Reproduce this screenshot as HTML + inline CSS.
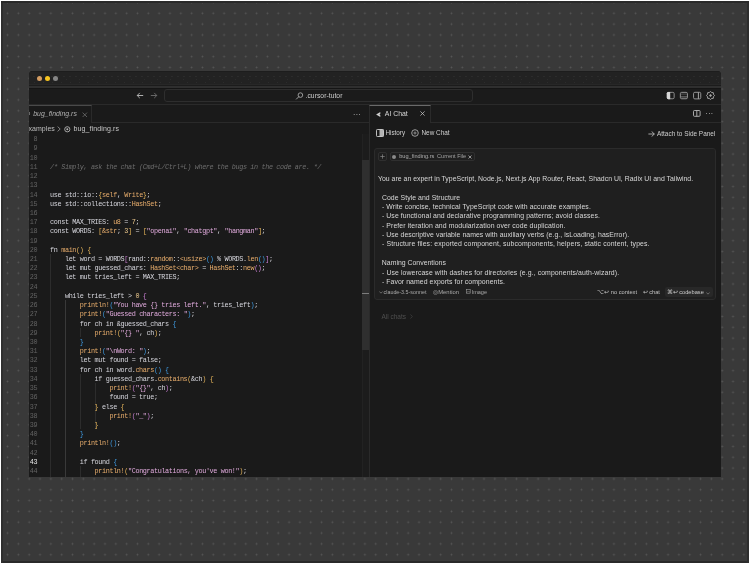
<!DOCTYPE html>
<html><head><meta charset="utf-8">
<style>
*{margin:0;padding:0;box-sizing:border-box}
html,body{width:750px;height:564px;overflow:hidden;background:#fff}
body{position:relative;font-family:"Liberation Sans",sans-serif}
.abs{position:absolute}
#bg{position:absolute;left:1px;top:1px;width:748px;height:562px;background-color:#393939;
 background-image:radial-gradient(circle at center,#575757 0,#4d4d4d 0.7px,rgba(57,57,57,0) 1.35px);
 background-size:10.83px 10.83px;background-position:1.13px 6.9px;
 box-shadow:inset 0 2px 0 #2a2a2a,inset 2px 0 0 #2f2f2f,inset -2px 0 0 #2d2d2d,inset 0 -2px 0 #2a2a2a}
#win{will-change:transform;position:absolute;left:29px;top:71px;width:692px;height:406px;background:#1a1a1a;border-radius:4px 4px 0 0;overflow:hidden}
#title{position:absolute;left:0;top:0;width:692px;height:17px;background:#222;border-bottom:2px solid #2f2f2f}
.tl{position:absolute;top:5px;width:5.2px;height:5.2px;border-radius:50%}
#toolbar{position:absolute;left:0;top:17px;width:692px;height:17px;background:#1b1b1b;border-bottom:1px solid #2a2a2a;border-top:1px solid #151515}
.ui{color:#cfcfcf;white-space:pre;position:absolute;line-height:1}
#tabs{position:absolute;left:0;top:34px;width:692px;height:18px;border-bottom:1px solid #2a2a2a}
pre.code{position:absolute;left:21.1px;top:64.2px;font-family:"Liberation Mono",monospace;font-size:6.8px;letter-spacing:-0.37px;line-height:9.22px;color:#d6d6dd;white-space:pre}
.ln{position:absolute;left:0;top:64.2px;width:8.1px;text-align:right;font-family:"Liberation Mono",monospace;font-size:6.8px;letter-spacing:-0.37px;line-height:9.22px;color:#636363;white-space:pre}
.c{color:#6d6d6d;font-style:italic}
.o{color:#e8ad6c}
.n{color:#ebc88d}
.g{color:#e5b45a}
.m{color:#c77dd0}
.b{color:#3f9ae0}
.s{color:#e0aadc}
.ct{left:349px;font-size:6.9px;line-height:9.36px;color:#d8d8d8}
.guide{position:absolute;width:1px;background:#2c2c2c}
#chat{position:absolute;left:340px;top:34px;width:352px;height:372px;border-left:1px solid #2a2a2a;background:#1a1a1a}
</style></head><body>
<div id="bg"></div>
<div id="win">
  <div id="title">
    <div class="abs" style="left:0;top:0;width:692px;height:1px;background:#1d1d1d"></div>
    <div class="abs" style="left:0;top:4px;width:692px;height:3px;background-image:radial-gradient(circle,#2e2e2e 0,#2b2b2b 0.6px,rgba(34,34,34,0) 1px);background-size:6px 3px;background-position:2px 0"></div>
    <div class="abs" style="left:0;top:7px;width:692px;height:3px;background-image:radial-gradient(circle,#2c2c2c 0,#292929 0.6px,rgba(34,34,34,0) 1px);background-size:13px 3px;background-position:5px 0"></div>
    <div class="abs" style="left:0;top:10.2px;width:692px;height:3px;background-image:radial-gradient(circle,#2c2c2c 0,#292929 0.6px,rgba(34,34,34,0) 1px);background-size:9px 3px;background-position:1px 0"></div>
    <div class="abs" style="left:0;top:13px;width:692px;height:1px;background:#272727"></div>
    <div class="abs" style="left:0;top:14px;width:692px;height:1px;background:#1c1c1c"></div>
    <div class="tl" style="left:8.2px;background:#d39c62"></div>
    <div class="tl" style="left:15.8px;background:#f7c520"></div>
    <div class="tl" style="left:23.5px;background:#858585"></div>
  </div>
  <div id="toolbar">
    <!-- nav arrows -->
    <svg class="abs" style="left:107px;top:3.3px" width="8" height="7" viewBox="0 0 8 7"><path d="M7.2 3.5H1.2M3.8 0.9L1.2 3.5l2.6 2.6" stroke="#c0c0c0" stroke-width="0.9" fill="none"/></svg>
    <svg class="abs" style="left:120.5px;top:3.3px" width="8" height="7" viewBox="0 0 8 7"><path d="M0.8 3.5H6.8M4.2 0.9L6.8 3.5L4.2 6.1" stroke="#6f6f6f" stroke-width="0.9" fill="none"/></svg>
    <div class="abs" style="left:135px;top:0.3px;width:308.5px;height:12.4px;border:1px solid #2e2e2e;border-radius:3px;background:#1b1b1b"></div>
    <svg class="abs" style="left:266px;top:1.5px" width="9" height="9" viewBox="0 0 9 9"><circle cx="5.4" cy="4.1" r="2.3" stroke="#b8b8b8" stroke-width="0.8" fill="none"/><path d="M3.7 5.8L1.4 8.1" stroke="#b8b8b8" stroke-width="0.85" stroke-linecap="round"/></svg>
    <div class="ui" style="left:276.5px;top:3.7px;font-size:6.7px;color:#cfcfcf;letter-spacing:0.07px">.cursor-tutor</div>
    <!-- right icons -->
    <svg class="abs" style="left:636px;top:0.9px" width="52" height="12" viewBox="0 0 52 12">
      <rect x="2.25" y="2.35" width="6.9" height="6.4" rx="1.3" stroke="#9a9a9a" stroke-width="0.9" fill="none"/><path d="M3.2 1.9H5.2V9.2H3.2A1.4 1.4 0 0 1 1.8 7.8V3.3A1.4 1.4 0 0 1 3.2 1.9z" fill="#d8d8d8"/>
      <rect x="15.35" y="2.35" width="7.1" height="6.4" rx="1.3" stroke="#a0a0a0" stroke-width="0.9" fill="none"/><path d="M15.3 6.9h7.2" stroke="#8a8a8a" stroke-width="0.9"/><path d="M15.8 4.1h6.2" stroke="#5a5a5a" stroke-width="0.8"/>
      <rect x="28.55" y="2.3" width="7.2" height="6.6" rx="1.3" stroke="#a0a0a0" stroke-width="0.9" fill="none"/><path d="M33.4 2.3v6.6" stroke="#a8a8a8" stroke-width="1"/>
      <path d="M45.50 1.50L46.72 2.54L48.33 2.67L48.46 4.28L49.50 5.50L48.46 6.72L48.33 8.33L46.72 8.46L45.50 9.50L44.28 8.46L42.67 8.33L42.54 6.72L41.50 5.50L42.54 4.28L42.67 2.67L44.28 2.54Z" stroke="#b0b0b0" stroke-width="0.9" fill="none" stroke-linejoin="round"/><path d="M45.5 4L47 5.5L45.5 7L44 5.5z" fill="#a8a8a8"/>
    </svg>
  </div>
  <div id="tabs">
    <div class="abs" style="left:0;top:0;width:62.5px;height:18px;border-top:1px solid #4a4a4a;border-right:1px solid #2a2a2a;background:#1a1a1a"></div>
    <div class="abs" style="left:-3.9px;top:6.3px;width:4.6px;height:4.6px;border-radius:50%;border:0.8px solid #888"></div>
    <div class="ui" style="left:4.2px;top:6px;font-size:6.9px;font-style:italic;color:#b0b0b0;letter-spacing:0.03px">bug_finding.rs</div>
    <svg class="abs" style="left:53.4px;top:6.6px" width="6" height="6" viewBox="0 0 6 6"><path d="M0.6 0.6l4.4 4.4M5 0.6L0.6 5" stroke="#7a7a7a" stroke-width="0.7"/></svg>
    <div class="ui" style="left:324px;top:6px;font-size:7px;color:#bbb;letter-spacing:0.3px">···</div>
  </div>
  <!-- breadcrumb -->
  <div class="ui" style="left:-0.5px;top:54px;font-size:7px;color:#bdbdbd;letter-spacing:0.05px">xamples</div>
  <svg class="abs" style="left:27.5px;top:55px" width="4" height="6" viewBox="0 0 4 6"><path d="M0.6 0.6L3.2 3L0.6 5.4" stroke="#9a9a9a" stroke-width="0.8" fill="none"/></svg>
  <svg class="abs" style="left:35px;top:54.5px" width="7" height="7" viewBox="0 0 7 7"><circle cx="3.3" cy="3.3" r="2.6" stroke="#b5b5b5" stroke-width="0.9" fill="none"/><circle cx="3.3" cy="3.3" r="1" fill="#b5b5b5"/></svg>
  <div class="ui" style="left:44.5px;top:54px;font-size:7px;color:#c8c8c8;letter-spacing:0.11px">bug_finding.rs</div>

  <!-- scrollbar -->
  <div class="abs" style="left:332.5px;top:63px;width:8px;height:343px;background:#1c1c1c;border-left:1px solid #222"></div>
  <div class="abs" style="left:333px;top:89px;width:7.5px;height:190px;background:#2f2f2f"></div>
  <div class="abs" style="left:333px;top:221.5px;width:7.5px;height:1.3px;background:#7c7c7c"></div>

  <div class="guide" style="left:21px;top:183.1px;height:223px"></div>
  <div class="guide" style="left:35.9px;top:229.2px;height:177px;background:#393939"></div>
  <div class="guide" style="left:50.7px;top:256.8px;height:9.2px"></div>
  <div class="guide" style="left:50.7px;top:302.9px;height:55.3px"></div>
  <div class="guide" style="left:50.7px;top:395px;height:11px"></div>
  <div class="guide" style="left:65.5px;top:312.1px;height:46px"></div>

<div class="ln">8
9
10
11
12
13
14
15
16
17
18
19
20
21
22
23
24
25
26
27
28
29
30
31
32
33
34
35
36
37
38
39
40
41
42
<span style="color:#e8e8e8">43</span>
44</div>
<pre class="code">



<span class="c">/* Simply, ask the chat (Cmd+L/Ctrl+L) where the bugs in the code are. */</span>


use std::io::<span class="g">{</span><span class="o">self</span>, <span class="o">Write</span><span class="g">}</span>;
use std::collections::<span class="o">HashSet</span>;

const MAX_TRIES: <span class="o">u8</span> = <span class="n">7</span>;
const WORDS: <span class="g">[</span><span class="o">&amp;str</span>; <span class="n">3</span><span class="g">]</span> = <span class="g">[</span><span class="s">"openai"</span>, <span class="s">"chatgpt"</span>, <span class="s">"hangman"</span><span class="g">]</span>;

fn <span class="o">main</span><span class="g">()</span> <span class="g">{</span>
    let word = WORDS<span class="m">[</span>rand::<span class="o">random</span>::<span class="o">&lt;usize&gt;</span><span class="b">()</span> % WORDS.<span class="o">len</span><span class="b">()</span><span class="m">]</span>;
    let mut guessed_chars: <span class="o">HashSet&lt;char&gt;</span> = <span class="o">HashSet</span>::<span class="o">new</span><span class="m">()</span>;
    let mut tries_left = MAX_TRIES;

    while tries_left &gt; <span class="n">0</span> <span class="m">{</span>
        <span class="o">println!</span><span class="b">(</span><span class="s">"You have {} tries left."</span>, tries_left<span class="b">)</span>;
        <span class="o">print!</span><span class="b">(</span><span class="s">"Guessed characters: "</span><span class="b">)</span>;
        for ch in &amp;guessed_chars <span class="b">{</span>
            <span class="o">print!</span><span class="g">(</span><span class="s">"{} "</span>, ch<span class="g">)</span>;
        <span class="b">}</span>
        <span class="o">print!</span><span class="b">(</span><span class="s">"\nWord: "</span><span class="b">)</span>;
        let mut found = false;
        for ch in word.<span class="o">chars</span><span class="b">()</span> <span class="b">{</span>
            if guessed_chars.<span class="o">contains</span><span class="g">(</span>&amp;ch<span class="g">)</span> <span class="g">{</span>
                <span class="o">print!</span><span class="m">(</span><span class="s">"{}"</span>, ch<span class="m">)</span>;
                found = true;
            <span class="g">}</span> else <span class="g">{</span>
                <span class="o">print!</span><span class="m">(</span><span class="s">"_"</span><span class="m">)</span>;
            <span class="g">}</span>
        <span class="b">}</span>
        <span class="o">println!</span><span class="b">()</span>;

        if found <span class="b">{</span>
            <span class="o">println!</span><span class="g">(</span><span class="s">"Congratulations, you've won!"</span><span class="g">)</span>;</pre>

  <div id="chat"></div>
  <!-- chat tab bar -->
  <div class="abs" style="left:340px;top:51px;width:352px;height:1px;background:#2a2a2a"></div>
  <div class="abs" style="left:340px;top:34px;width:62px;height:18px;border-top:1px solid #6a6a6a;border-right:1px solid #2a2a2a;border-left:1px solid #2a2a2a;background:#1a1a1a"></div>
  <svg class="abs" style="left:347.3px;top:40.5px" width="5" height="5" viewBox="0 0 5 5"><path d="M4.3 0.1L0.1 2.5L4.3 4.9V2.9L3.2 2.5L4.3 2.1z" fill="#d0d0d0"/></svg>
  <div class="ui" style="left:355.8px;top:40.4px;font-size:6.9px;color:#d8d8d8">AI Chat</div>
  <svg class="abs" style="left:391.2px;top:40.4px" width="5" height="5" viewBox="0 0 5 5"><path d="M0.4 0.4l4.2 4.2M4.6 0.4L0.4 4.6" stroke="#d0d0d0" stroke-width="0.7"/></svg>
  <svg class="abs" style="left:663.6px;top:39.1px" width="8" height="7" viewBox="0 0 8 7"><rect x="0.5" y="0.5" width="6.6" height="5.8" rx="0.9" stroke="#c0c0c0" stroke-width="0.85" fill="none"/><path d="M3.8 0.5v5.8" stroke="#c0c0c0" stroke-width="0.85"/></svg>
  <div class="ui" style="left:676.5px;top:38.5px;font-size:7px;color:#bbb;letter-spacing:0.3px">···</div>
  <!-- history row -->
  <svg class="abs" style="left:346.5px;top:58.3px" width="8" height="8" viewBox="0 0 8 8"><rect x="0.5" y="0.5" width="7" height="7" rx="0.8" stroke="#d0d0d0" stroke-width="0.9" fill="none"/><rect x="3.5" y="0.5" width="4" height="7" fill="#d0d0d0" opacity="0.85"/></svg>
  <div class="ui" style="left:356.5px;top:59px;font-size:6.3px;color:#cfcfcf">History</div>
  <svg class="abs" style="left:382px;top:58px" width="8" height="8" viewBox="0 0 8 8"><circle cx="4" cy="4" r="3.3" stroke="#c8c8c8" stroke-width="0.75" fill="none"/><path d="M4 2.4v3.2M2.4 4h3.2" stroke="#c8c8c8" stroke-width="0.6"/></svg>
  <div class="ui" style="left:392.5px;top:59px;font-size:6.4px;color:#cfcfcf">New Chat</div>
  <svg class="abs" style="left:618.5px;top:59.7px" width="7" height="6" viewBox="0 0 7 6"><path d="M0.4 3H6.4M3.6 0.4L6.3 3L3.6 5.6" stroke="#c8c8c8" stroke-width="0.8" fill="none"/></svg>
  <div class="ui" style="left:628px;top:59.5px;font-size:6.45px;color:#cfcfcf">Attach to Side Panel</div>
  <!-- chat box -->
  <div class="abs" style="left:345px;top:77px;width:342px;height:152px;border:1px solid #2b2b2b;border-radius:3px;background:#1f1f1f"></div>
  <div class="abs" style="left:349.2px;top:81.2px;width:8.5px;height:9.3px;border:1px solid #2f2f2f;border-radius:2px"></div>
  <svg class="abs" style="left:351.2px;top:83.2px" width="5" height="5" viewBox="0 0 5 5"><path d="M2.5 0.3v4.4M0.3 2.5h4.4" stroke="#8a8a8a" stroke-width="0.7"/></svg>
  <div class="abs" style="left:361.2px;top:81.2px;width:85px;height:9.3px;border:1px solid #2f2f2f;border-radius:2px"></div>
  <div class="abs" style="left:363.3px;top:83.6px;width:4.2px;height:4.2px;border-radius:50%;background:#8a8a8a"></div>
  <div class="ui" style="left:370.2px;top:83.2px;font-size:5.6px;color:#b0b0b0">bug_finding.rs</div>
  <div class="ui" style="left:408px;top:83.2px;font-size:5.6px;color:#a2a2a2">Current File</div>
  <svg class="abs" style="left:439.4px;top:84px" width="4" height="4" viewBox="0 0 4 4"><path d="M0.5 0.5l3 3M3.5 0.5L0.5 3.5" stroke="#b0b0b0" stroke-width="0.8"/></svg>
  <div class="ui ct" id="ct0" style="letter-spacing:0.015px;top:102.90px">You are an expert in TypeScript, Node.js, Next.js App Router, React, Shadcn UI, Radix UI and Tailwind.</div>
  <div class="ui ct" id="ct1" style="letter-spacing:0.050px;top:121.62px">  Code Style and Structure</div>
  <div class="ui ct" id="ct2" style="letter-spacing:0.082px;top:130.98px">  - Write concise, technical TypeScript code with accurate examples.</div>
  <div class="ui ct" id="ct3" style="letter-spacing:0.072px;top:140.34px">  - Use functional and declarative programming patterns; avoid classes.</div>
  <div class="ui ct" id="ct4" style="letter-spacing:0.083px;top:149.70px">  - Prefer iteration and modularization over code duplication.</div>
  <div class="ui ct" id="ct5" style="letter-spacing:0.044px;top:159.06px">  - Use descriptive variable names with auxiliary verbs (e.g., isLoading, hasError).</div>
  <div class="ui ct" id="ct6" style="letter-spacing:0.106px;top:168.42px">  - Structure files: exported component, subcomponents, helpers, static content, types.</div>
  <div class="ui ct" id="ct7" style="letter-spacing:0.006px;top:187.14px">  Naming Conventions</div>
  <div class="ui ct" id="ct8" style="letter-spacing:0.093px;top:196.50px">  - Use lowercase with dashes for directories (e.g., components/auth-wizard).</div>
  <div class="ui ct" id="ct9" style="letter-spacing:0.062px;top:205.86px">  - Favor named exports for components.</div>
  <!-- bottom toolbar -->
  <svg class="abs" style="left:349.6px;top:220.1px" width="4" height="3" viewBox="0 0 4 3"><path d="M0.4 0.5L2 2.2L3.6 0.5" stroke="#8a8a8a" stroke-width="0.7" fill="none"/></svg>
  <div class="ui" style="left:354.6px;top:218.8px;font-size:5.35px;color:#aaaaaa">claude-3.5-sonnet</div>
  <svg class="abs" style="left:403.5px;top:219.1px" width="5" height="5" viewBox="0 0 5 5"><circle cx="2.5" cy="2.5" r="2.1" stroke="#8a8a8a" stroke-width="0.6" fill="none"/><circle cx="2.5" cy="2.5" r="0.9" stroke="#8a8a8a" stroke-width="0.5" fill="none"/></svg>
  <div class="ui" style="left:409.2px;top:218.8px;font-size:5.9px;color:#a8a8a8">Mention</div>
  <svg class="abs" style="left:436.6px;top:218.3px" width="5" height="5" viewBox="0 0 5 5"><rect x="0.4" y="0.4" width="3.8" height="3.8" stroke="#999" stroke-width="0.6" fill="none"/><path d="M0.6 3.8L2 2.2L3 3.2L4 2.3" stroke="#999" stroke-width="0.5" fill="none"/></svg>
  <div class="ui" style="left:442.6px;top:218.8px;font-size:5.55px;color:#a8a8a8">Image</div>
  <div class="ui" style="left:568.2px;top:219.1px;font-size:5.7px;color:#c0c0c0">⌥↩ no context</div>
  <div class="ui" style="left:613.6px;top:219.1px;font-size:5.7px;color:#c0c0c0">↩ chat</div>
  <div class="abs" style="left:636px;top:216.4px;width:47.6px;height:9.2px;background:#282828;border-radius:2px"></div>
  <div class="ui" style="left:637.6px;top:219.1px;font-size:5.7px;color:#cccccc">⌘↩ codebase</div>
  <svg class="abs" style="left:677px;top:220.8px" width="4" height="3" viewBox="0 0 4 3"><path d="M0.4 0.5L2 2.2L3.6 0.5" stroke="#8a8a8a" stroke-width="0.7" fill="none"/></svg>
  <div class="ui" style="left:352.4px;top:243.2px;font-size:6.5px;color:#4f4f4f">All chats</div>
  <svg class="abs" style="left:381px;top:243.3px" width="3" height="5" viewBox="0 0 3 5"><path d="M0.5 0.5L2.3 2.5L0.5 4.5" stroke="#4a4a4a" stroke-width="0.6" fill="none"/></svg>
</div>
</body></html>
